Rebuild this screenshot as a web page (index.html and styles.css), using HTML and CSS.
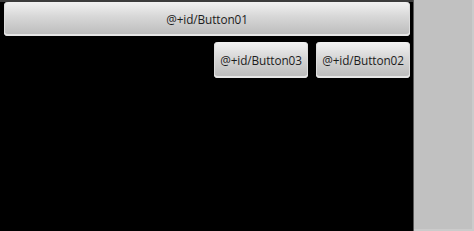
FILE: index.html
```html
<!DOCTYPE html>
<html>
  <head>
    <title>Layout preview</title>
    <link rel="stylesheet" href="styles.css">
  </head>
  <body>
    <div class="frame">
      <div class="screen">
        <div class="status-line"></div>
        <div class="row">
          <button type="button" class="btn btn-wide">@+id/Button01</button>
        </div>
        <div class="row row-right">
          <button type="button" class="btn">@+id/Button03</button>
          <button type="button" class="btn">@+id/Button02</button>
        </div>
      </div>
      <div class="side"></div>
    </div>
  </body>
</html>
```

FILE: styles.css
```css
html, body {
  margin: 0;
  height: 100%;
}

body {
  font-family: "Open Sans", "DejaVu Sans", sans-serif;
  background: #000;
}

.frame {
  display: flex;
  height: 231px;
}

.screen {
  width: 413px;
  background: #000;
  display: flex;
  flex-direction: column;
}

.status-line {
  height: 2px;
  background: #3c3c3c;
}

.row {
  display: flex;
  padding: 0 3px 0 4px;
}

.row-right {
  justify-content: flex-end;
  gap: 8px;
  margin-top: 6px;
}

.btn {
  height: 36px;
  width: 94px;
  padding: 0;
  border: none;
  border-radius: 4px;
  background: linear-gradient(#f2f2f2, #d6d6d6 45%, #bababa);
  box-shadow: inset 0 -2px 0 #e6e6e6, inset 1px 0 0 #dcdcdc, inset -1px 0 0 #dcdcdc;
  color: #1c1c1c;
  font-family: "Open Sans", "DejaVu Sans", sans-serif;
  font-size: 11.8px;
  letter-spacing: -0.1px;
}

.btn-wide {
  width: 100%;
  height: 34px;
}

.side {
  flex: 1;
  background: #c1c1c1;
  border-left: 1px solid #5a5a5a;
  box-shadow: inset -2px -2px 0 #cbcbcb;
}
```
